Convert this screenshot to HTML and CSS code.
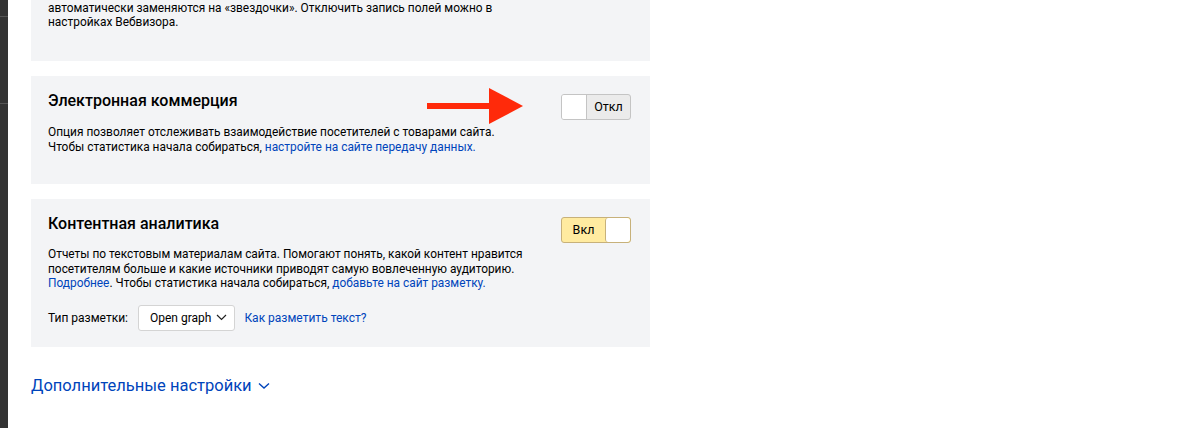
FILE: index.html
```html
<!DOCTYPE html>
<html lang="ru">
<head>
    <meta charset="UTF-8">
    <meta name="viewport" content="width=device-width, initial-scale=1.0">
    <title>Настройки счетчика</title>
    <link rel="stylesheet" href="styles.css">
</head>
<body>

    <div class="page">
        <div class="sidebar">
            <div class="sidebar-line first"></div>
            <div class="sidebar-line second"></div>
        </div>

        <div class="settings">
            <div class="card card-top">
                <p class="desc">автоматически заменяются на «звездочки». Отключить запись полей можно в<br>настройках Вебвизора.</p>
            </div>

            <div class="card card-ecommerce">
                <div class="card-head">
                    <h3>Электронная коммерция</h3>
                    <div class="pointer">
                        <svg width="96" height="36" viewBox="0 0 96 36">
                            <rect x="0" y="15" width="63" height="6" fill="#ff2a0a"/>
                            <polygon points="62,0 96,18 62,36" fill="#ff2a0a"/>
                        </svg>
                    </div>
                    <div class="toggle off">
                        <span class="knob"></span>
                        <span class="toggle-text">Откл</span>
                    </div>
                </div>
                <p class="desc">Опция позволяет отслеживать взаимодействие посетителей с товарами сайта.<br>Чтобы статистика начала собираться, <a href="#">настройте на сайте передачу данных.</a></p>
            </div>

            <div class="card card-content">
                <div class="card-head">
                    <h3>Контентная аналитика</h3>
                    <div class="toggle on">
                        <span class="toggle-text">Вкл</span>
                        <span class="knob"></span>
                    </div>
                </div>
                <p class="desc">Отчеты по текстовым материалам сайта. Помогают понять, какой контент нравится<br>посетителям больше и какие источники приводят самую вовлеченную аудиторию.<br><a href="#">Подробнее</a>. Чтобы статистика начала собираться, <a href="#">добавьте на сайт разметку.</a></p>
                <div class="markup-row">
                    <span class="markup-label">Тип разметки:</span>
                    <div class="select">
                        Open graph
                        <svg width="11" height="7" viewBox="0 0 11 7"><polyline points="1,1 5.5,5.5 10,1" fill="none" stroke="#222" stroke-width="1.2"/></svg>
                    </div>
                    <a href="#">Как разметить текст?</a>
                </div>
            </div>

            <div class="more">
                <a href="#">Дополнительные настройки</a>
                <svg width="12" height="8" viewBox="0 0 12 8"><polyline points="1,1.5 6,6 11,1.5" fill="none" stroke="#0044bb" stroke-width="1.4"/></svg>
            </div>
        </div>
    </div>

</body>
</html>
```

FILE: styles.css
```css
body {
    margin: 0;
    font-family: Roboto, "Liberation Sans", Arial, sans-serif;
    color: #000;
    background: #fff;
}

a {
    color: #0044bb;
    text-decoration: none;
}

.page {
    display: flex;
    height: 428px;
    overflow: hidden;
}

.sidebar {
    width: 8px;
    background: #333;
    flex-shrink: 0;
}

.sidebar-line {
    height: 1px;
    background: #555;
}

.sidebar-line.first {
    margin-top: 16px;
}

.sidebar-line.second {
    margin-top: 86px;
}

.settings {
    width: 619px;
    margin-left: 23px;
}

.card {
    background: #f3f4f6;
    padding: 14px 17px 16px;
    margin-bottom: 15px;
}

.card-top {
    padding-top: 1px;
    padding-bottom: 32px;
}

.card-ecommerce {
    padding-bottom: 30px;
}

.card-head {
    display: flex;
    align-items: flex-start;
}

.card-head h3 {
    margin: 0;
    font-size: 16px;
    font-weight: 500;
    line-height: 22px;
    flex: 1;
}

.pointer {
    margin: -2px 38px 0 0;
    height: 36px;
}

.toggle {
    display: flex;
    width: 70px;
    height: 26px;
    margin-top: 4px;
    margin-right: 2px;
    box-sizing: border-box;
    border-radius: 3px;
    font-size: 12.5px;
    overflow: hidden;
}

.toggle.off {
    border: 1px solid #c4c4c4;
    background: #ebebeb;
}

.toggle.on {
    border: 1px solid #c7b17a;
    background: #ffeba0;
}

.knob {
    width: 24px;
    background: #fff;
    flex-shrink: 0;
}

.toggle.off .knob {
    border-right: 1px solid #c4c4c4;
}

.toggle.on .knob {
    border-left: 1px solid #c7b17a;
    border-radius: 3px;
}

.toggle-text {
    flex: 1;
    text-align: center;
    line-height: 24px;
}

.desc {
    margin: 1px 0 0;
    font-size: 11.9px;
    line-height: 14.5px;
}

.card-content .desc {
    margin-top: 4px;
}

.card-top .desc {
    margin: 0;
    line-height: 14px;
}

.markup-row {
    display: flex;
    align-items: center;
    margin-top: 14px;
    font-size: 12px;
}

.markup-label {
    margin-right: 10px;
}

.select {
    display: flex;
    align-items: center;
    gap: 5px;
    height: 26px;
    box-sizing: border-box;
    padding: 0 7px 0 11px;
    background: #fff;
    border: 1px solid #d4d4d4;
    border-radius: 3px;
    margin-right: 9px;
}

.more {
    display: flex;
    align-items: center;
    gap: 6px;
    margin-top: 29px;
    font-size: 16.5px;
    line-height: 20px;
}
```
